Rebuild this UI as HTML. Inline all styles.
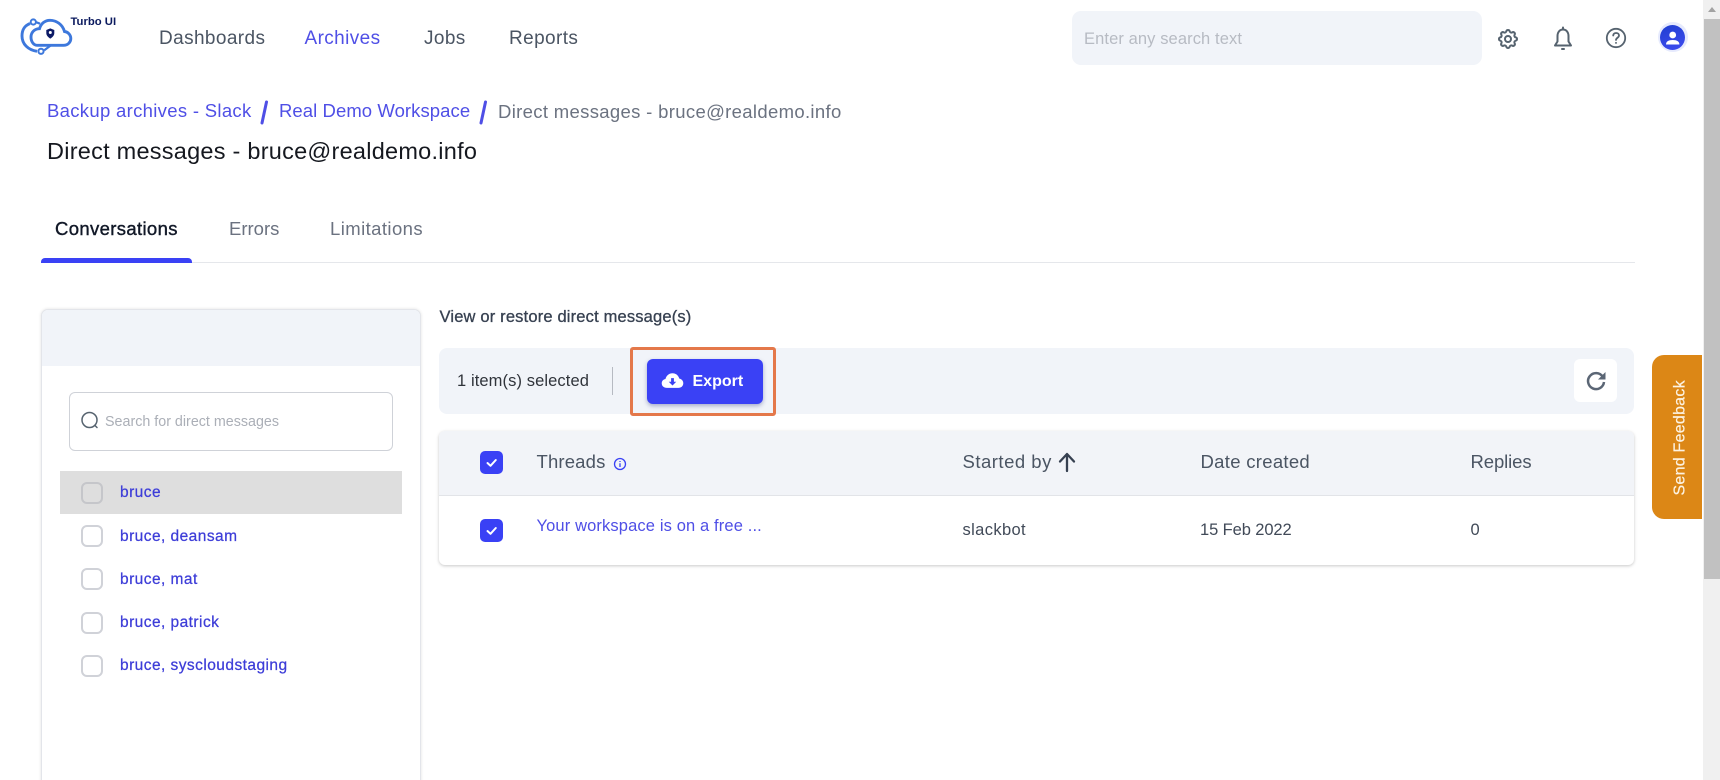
<!DOCTYPE html>
<html lang="en">
<head>
<meta charset="utf-8">
<title>Direct messages</title>
<style>
html,body{margin:0;padding:0;background:#fff;width:1720px;height:780px;overflow:hidden;font-family:"Liberation Sans",Arial,sans-serif;}
#root{position:absolute;left:0;top:0;width:1720px;height:780px;overflow:hidden;}
.a{position:absolute;}
.t{position:absolute;white-space:nowrap;line-height:24px;height:24px;}
svg{position:absolute;display:block;overflow:visible;}
.nav{font-size:19px;letter-spacing:.39px;color:#4b5563;top:26.5px;}
.lnk{color:#4f4fe6;}
.th{font-size:18.5px;color:#4b5563;top:450px;}
.td{font-size:16.5px;color:#414a58;top:518px;}
.li{font-size:15.5px;letter-spacing:.45px;color:#3d3dd8;left:120px;-webkit-text-stroke:.25px #3d3dd8;}
.cb{position:absolute;left:81px;width:18px;height:18px;border:2px solid #d0d2d8;border-radius:6px;background:#fff;}
.ck{position:absolute;left:480px;width:23px;height:23px;border-radius:5px;background:#3a41f5;}
</style>
</head>
<body>
<div id="root">

<!-- logo -->
<svg style="left:0;top:0" width="80" height="70" viewBox="0 0 80 70" fill="none">
  <path d="M37 45.3H63.5C68 45.3 70.8 42 70.8 38.6C70.800 34.500 67.500 31.800 64.500 31.500C62.500 24.500 56.500 20.300 50 20.300C45 20.300 41 23.500 39.500 28.700C34.500 28.700 31 32.500 31 37C31 41.500 33.500 45.300 37 45.300Z" stroke="#3d78dc" stroke-width="2.900"/>
  <path d="M30 23.500C24 26 22 30 22 36C22 44 28 50 37 51.300" stroke="#3d78dc" stroke-width="2.900"/>
  <path d="M35.700 22L40 23.700M44.300 50.300L51 45.300" stroke="#3d78dc" stroke-width="2.200"/>
  <circle cx="33.300" cy="22" r="2.600" stroke="#3d78dc" stroke-width="2"/>
  <circle cx="41" cy="51.300" r="2.600" stroke="#3d78dc" stroke-width="2"/>
  <path d="M50.300 28.400L54.300 30V33C54.300 35.500 52.500 37.300 50.300 38.600C48.100 37.300 46.300 35.500 46.300 33V30Z" fill="#0c1a66"/>
  <circle cx="50.300" cy="32.500" r="1.500" fill="#fff"/>
</svg>
<div class="t" style="left:70.500px;top:9.500px;font-size:11.300px;font-weight:700;color:#0b1a5e;">Turbo UI</div>

<!-- nav -->
<div class="t nav" style="left:159px">Dashboards</div>
<div class="t nav" style="left:304.500px;color:#4f4fe6">Archives</div>
<div class="t nav" style="left:424px">Jobs</div>
<div class="t nav" style="left:509px">Reports</div>

<!-- global search -->
<div class="a" style="left:1072px;top:11px;width:410px;height:54px;background:#f1f4f9;border-radius:9px;"></div>
<div class="t" style="left:1084px;top:27px;font-size:16.500px;letter-spacing:.1px;color:#b7bbc3;">Enter any search text</div>

<!-- gear -->
<svg style="left:1496px;top:26.500px" width="24" height="24" viewBox="0 0 24 24" fill="none" stroke="#56636f" stroke-width="2" stroke-linejoin="round">
  <path d="M10.325 4.317c.426-1.756 2.924-1.756 3.35 0a1.724 1.724 0 002.573 1.066c1.543-.94 3.31.826 2.37 2.37a1.724 1.724 0 001.065 2.572c1.756.426 1.756 2.924 0 3.35a1.724 1.724 0 00-1.066 2.573c.94 1.543-.826 3.31-2.37 2.37a1.724 1.724 0 00-2.572 1.065c-.426 1.756-2.924 1.756-3.35 0a1.724 1.724 0 00-2.573-1.066c-1.543.94-3.31-.826-2.37-2.37a1.724 1.724 0 00-1.065-2.572c-1.756-.426-1.756-2.924 0-3.35a1.724 1.724 0 001.066-2.573c-.94-1.543.826-3.31 2.37-2.37.996.608 2.296.07 2.572-1.065z"/>
  <circle cx="12" cy="12" r="3"/>
</svg>
<!-- bell -->
<svg style="left:1550.500px;top:26px" width="24" height="24" viewBox="0 0 24 24" fill="none" stroke="#56636f" stroke-width="2" stroke-linejoin="round" stroke-linecap="round">
  <path d="M12 3.500C8.500 3.500 6.500 6.500 6.500 10V15.500L4 19.500H20L17.500 15.500V10C17.500 6.500 15.500 3.500 12 3.500Z"/>
  <path d="M12 1.500V3.500M11 23H13"/>
</svg>
<!-- help -->
<svg style="left:1604px;top:26px" width="24" height="24" viewBox="0 0 24 24" fill="none" stroke="#56636f" stroke-width="1.800" stroke-linecap="round">
  <circle cx="12" cy="12" r="9.200"/>
  <path d="M9.200 9.500C9.400 7.900 10.600 7 12.100 7C13.800 7 15 8.100 15 9.500C15 11.700 12 11.800 12 14"/>
  <path d="M12 16.800V17"/>
</svg>
<!-- avatar -->
<div class="a" style="left:1657.500px;top:22px;width:30px;height:30px;border-radius:50%;background:#e6eafd;"></div>
<div class="a" style="left:1660px;top:24.500px;width:25px;height:25px;border-radius:50%;background:linear-gradient(160deg,#1f3fd0,#3f4cf0);"></div>
<svg style="left:1660px;top:24.500px" width="25" height="25" viewBox="0 0 25 25" fill="#fff">
  <circle cx="12.700" cy="10" r="3.400"/>
  <path d="M6 19.500C6 16.500 8.500 15 12.700 15C16.900 15 19.400 16.500 19.400 19.500Z"/>
</svg>

<!-- breadcrumb -->
<div class="t lnk" style="left:47px;top:99px;font-size:18.500px;letter-spacing:.31px;">Backup archives - Slack</div>
<svg style="left:258px;top:98px" width="16" height="28" fill="none" stroke="#4f4fe6" stroke-width="3" stroke-linecap="round"><path d="M8.500 4L4 25"/></svg>
<div class="t lnk" style="left:279px;top:99px;font-size:18.500px;letter-spacing:.07px;">Real Demo Workspace</div>
<svg style="left:477px;top:98px" width="16" height="28" fill="none" stroke="#4f4fe6" stroke-width="3" stroke-linecap="round"><path d="M8.500 4L4 25"/></svg>
<div class="t" style="left:498px;top:100px;font-size:18.500px;letter-spacing:.33px;color:#6b7280;">Direct messages - bruce@realdemo.info</div>
<div class="t" style="left:47px;top:139px;font-size:23.500px;letter-spacing:.25px;color:#15181f;">Direct messages - bruce@realdemo.info</div>

<!-- tabs -->
<div class="t" style="left:55px;top:216.500px;font-size:18.500px;letter-spacing:.35px;color:#111827;-webkit-text-stroke:.4px #111827;">Conversations</div>
<div class="t" style="left:229px;top:216.500px;font-size:18.500px;color:#6b7280;">Errors</div>
<div class="t" style="left:330px;top:216.500px;font-size:18.500px;letter-spacing:.42px;color:#6b7280;">Limitations</div>
<div class="a" style="left:41px;top:262px;width:1594px;height:1px;background:#e5e7eb;"></div>
<div class="a" style="left:41px;top:257.500px;width:151px;height:5px;background:#3a41f5;border-radius:4px 4px 0 0;"></div>

<!-- left panel -->
<div class="a" style="left:41px;top:309px;width:378px;height:480px;background:#fff;border:1px solid #e3e5ea;border-radius:7px;box-shadow:0 0 3px rgba(0,0,0,.12);overflow:hidden;">
  <div style="height:56px;background:#f1f4f9;"></div>
</div>
<div class="a" style="left:69px;top:392px;width:322px;height:57px;border:1.500px solid #cfd2d8;border-radius:6px;background:#fff;"></div>
<svg style="left:80px;top:411px" width="20" height="20" fill="none" stroke="#56636f" stroke-width="1.500" stroke-linecap="round"><circle cx="9.500" cy="9" r="7.500"/><path d="M15 14.500L17 16.500"/></svg>
<div class="t" style="left:105px;top:409.500px;font-size:14.300px;color:#abafb7;">Search for direct messages</div>

<div class="a" style="left:60px;top:471px;width:342px;height:43px;background:#dedede;"></div>
<div class="cb" style="top:481.500px;background:transparent;border-color:#c5c6ca;"></div>
<div class="t li" style="top:481px">bruce</div>
<div class="cb" style="top:525px"></div>
<div class="t li" style="top:524.500px">bruce, deansam</div>
<div class="cb" style="top:568px"></div>
<div class="t li" style="top:567.500px">bruce, mat</div>
<div class="cb" style="top:611.500px"></div>
<div class="t li" style="top:611px">bruce, patrick</div>
<div class="cb" style="top:654.500px"></div>
<div class="t li" style="top:654px">bruce, syscloudstaging</div>

<!-- right heading -->
<div class="t" style="left:439.500px;top:304.500px;font-size:16.500px;letter-spacing:.17px;color:#374151;-webkit-text-stroke:.3px #374151;">View or restore direct message(s)</div>

<!-- toolbar -->
<div class="a" style="left:439px;top:348px;width:1195px;height:66px;background:#f1f4f9;border-radius:8px;"></div>
<div class="t" style="left:457px;top:368.500px;font-size:16.500px;letter-spacing:.1px;color:#30343b;">1 item(s) selected</div>
<div class="a" style="left:611.500px;top:367px;width:1.500px;height:28px;background:#b6bac2;"></div>
<div class="a" style="left:630px;top:347px;width:140px;height:63px;border:3px solid #e4784a;border-radius:3px;"></div>
<div class="a" style="left:647px;top:358.500px;width:116px;height:45px;background:#3a41f5;border-radius:6px;box-shadow:0 2px 4px rgba(30,40,120,.35);"></div>
<svg style="left:660.500px;top:373px" width="23" height="15" viewBox="0 0 24 16">
  <path d="M6 15.800C2.500 15.800 .5 13.600 .5 10.900C.5 8.500 2.200 6.700 4.500 6.400C5.500 2.800 8.300 .3 12 .3C15.500 .3 18.300 2.500 19.200 5.900C21.800 6.400 23.500 8.400 23.500 10.900C23.500 13.800 21.300 15.800 18.300 15.800Z" fill="#fff"/>
  <path d="M10.500 5.500H13.500V9.300H16L12 13.300L8 9.300H10.500Z" fill="#3a41f5"/>
</svg>
<div class="t" style="left:692.500px;top:369.500px;font-size:16px;font-weight:700;color:#fff;">Export</div>
<div class="a" style="left:1574px;top:359px;width:43px;height:43px;background:#fff;border-radius:6px;"></div>
<svg style="left:1584px;top:369px" width="24" height="24" viewBox="0 0 24 24" fill="none" stroke="#5b6675" stroke-width="2.500">
  <path d="M18.800 7.800A8 8 0 1 0 20 13"/>
  <path d="M21.500 3V10.500H14Z" fill="#5b6675" stroke="none"/>
</svg>

<!-- table -->
<div class="a" style="left:439px;top:431px;width:1195px;height:134px;background:#fff;border-radius:6px;box-shadow:0 1px 3px rgba(0,0,0,.22);overflow:hidden;">
  <div style="height:64px;background:#f2f4f8;border-bottom:1px solid #e2e4e8;"></div>
</div>
<div class="ck" style="top:451px"></div>
<svg style="left:480px;top:451px" width="23" height="23" fill="none" stroke="#fff" stroke-width="2" stroke-linecap="round" stroke-linejoin="round"><path d="M7.500 12L10.500 14.800L15.800 9"/></svg>
<div class="t th" style="left:536.500px;letter-spacing:.16px;">Threads</div>
<svg style="left:612.500px;top:456.500px" width="14" height="14" fill="none" stroke="#3a41f5" stroke-width="1.300"><circle cx="7" cy="7" r="5.500"/><path d="M7 6.300V10M7 4V5"/></svg>
<div class="t th" style="left:962.500px;letter-spacing:.5px;">Started by</div>
<svg style="left:1057px;top:452px" width="20" height="20" fill="none" stroke="#374151" stroke-width="2.300" stroke-linecap="round" stroke-linejoin="round"><path d="M10 19V2.500M3 9.500L10 2L17 9.500"/></svg>
<div class="t th" style="left:1200.500px;letter-spacing:.3px;">Date created</div>
<div class="t th" style="left:1470.500px;letter-spacing:-.1px;">Replies</div>

<div class="ck" style="top:518.500px"></div>
<svg style="left:480px;top:518.500px" width="23" height="23" fill="none" stroke="#fff" stroke-width="2" stroke-linecap="round" stroke-linejoin="round"><path d="M7.500 12L10.500 14.800L15.800 9"/></svg>
<div class="t lnk" style="left:536.500px;top:514px;font-size:16.500px;letter-spacing:.13px;">Your workspace is on a free ...</div>
<div class="t td" style="left:962.500px;letter-spacing:.37px;">slackbot</div>
<div class="t td" style="left:1200px;letter-spacing:-.1px;">15 Feb 2022</div>
<div class="t td" style="left:1470.500px;">0</div>

<!-- feedback -->
<div class="a" style="left:1652px;top:355px;width:50px;height:164px;background:#dc8716;border-radius:12px 0 0 12px;"></div>
<div class="t" style="left:1622.500px;top:425.500px;width:115px;text-align:center;font-size:16px;letter-spacing:.25px;color:#fdf3e3;transform:rotate(-90deg);transform-origin:57.500px 12px;-webkit-text-stroke:.2px #fdf3e3;">Send Feedback</div>

<!-- scrollbar -->
<div class="a" style="left:1703px;top:0;width:17px;height:780px;background:#f0f0f0;"></div>
<div class="a" style="left:1704px;top:19px;width:16px;height:560px;background:#c1c1c1;"></div>
<div class="a" style="left:1708px;top:7px;width:0;height:0;border-left:4px solid transparent;border-right:4px solid transparent;border-bottom:5px solid #a3a3a3;"></div>

</div>
</body>
</html>
